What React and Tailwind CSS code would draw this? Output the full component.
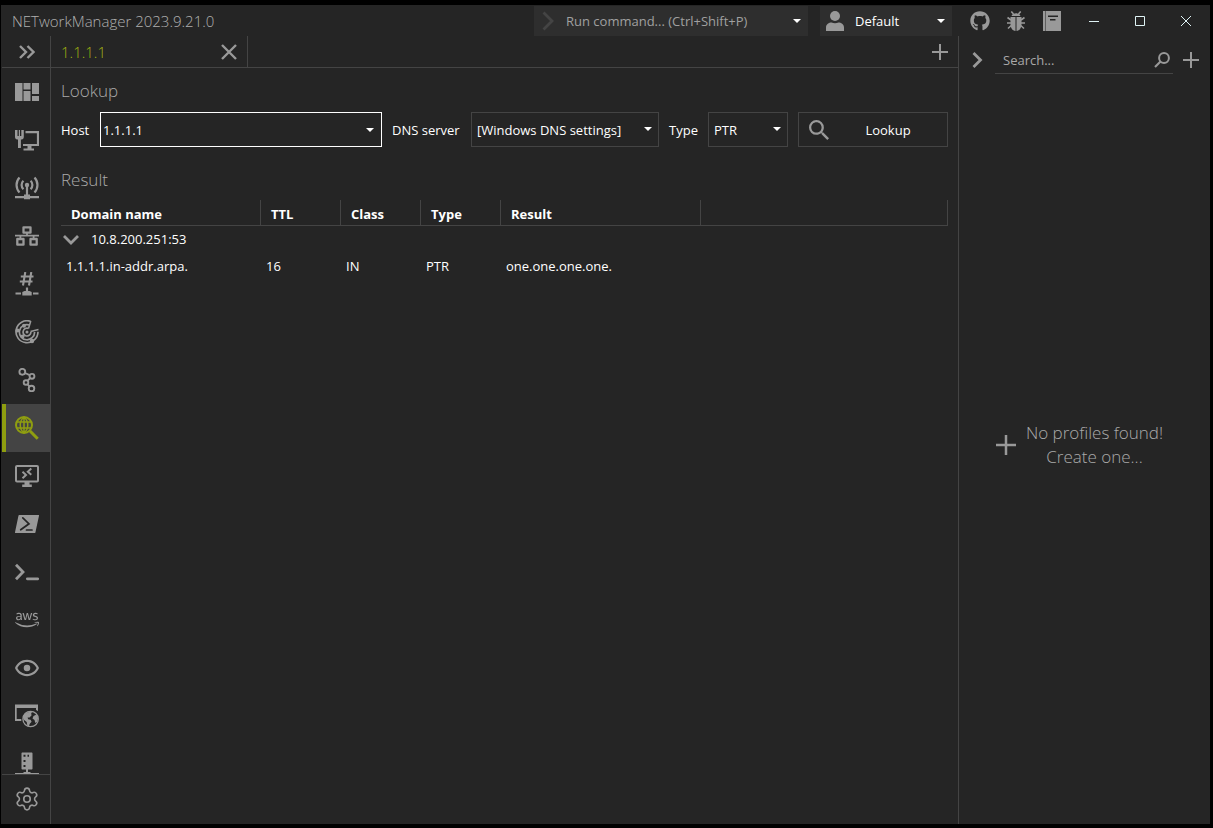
import { FaAws, FaGithub } from "react-icons/fa";
import { Settings } from "lucide-react";

function Icon({ box = "0 0 24 24", className = "size-6", children }) {
  return (
    <svg viewBox={box} className={className} fill="currentColor" aria-hidden="true">
      {children}
    </svg>
  );
}

function Plus({ className }) {
  return (
    <Icon box="0 0 16 16" className={className}>
      <path d="M7 0h2v7h7v2H9v7H7V9H0V7h7z" />
    </Icon>
  );
}

function Arrow() {
  return (
    <Icon box="0 0 8 4" className="h-1 w-2">
      <path d="M0 0h8L4 4z" />
    </Icon>
  );
}

function Stroke({ w = 2, ...rest }) {
  return <path fill="none" stroke="currentColor" strokeWidth={w} {...rest} />;
}

const magnify =
  "M9.5,3A6.5,6.5 0 0,1 16,9.5C16,11.11 15.41,12.59 14.44,13.73L14.71,14H15.5L20.5,19L19,20.5L14,15.5V14.71L13.73,14.44C12.59,15.41 11.11,16 9.5,16A6.5,6.5 0 0,1 3,9.5A6.5,6.5 0 0,1 9.5,3M9.5,5C7,5 5,7 5,9.5C5,12 7,14 9.5,14C12,14 14,12 14,9.5C14,7 12,5 9.5,5Z";

const tools = [
  {
    name: "Dashboard",
    icon: (
      <Icon>
        <path d="M0 3h7.5v18H0zM8.5 3h7v6.5h-7zM8.5 11h7v10h-7zM17 3h7v11h-7zM17 16h7v5h-7z" />
      </Icon>
    ),
  },
  {
    name: "Network interface",
    icon: (
      <Icon>
        <path d="M0 2h2.500v6h1.300V2h1.200v6h1.300V2h2.500v7c0 1.300-.9 2.300-2.200 2.500H5.900V20H3v-8.500H2.200C.9 11.300 0 10.300 0 9z" />
        <Stroke d="M10.500 4.200H23V17H8" w={2.2} />
        <path d="M12.500 18h4v2.600h2.500v2H8.500v-2h4z" />
      </Icon>
    ),
  },
  {
    name: "WiFi",
    icon: (
      <Icon>
        <circle cx="12" cy="9" r="2.200" />
        <Stroke d="M8.400 4.800a5.800 5.800 0 0 0 0 8.400M15.600 4.800a5.800 5.800 0 0 1 0 8.400M4.500 1.500a11 11 0 0 0 0 15M19.500 1.500a11 11 0 0 1 0 15M12 9v10" w={2.2} />
        <path d="M0 20h9v-1.500h6V20h9v2.200h-9v1H9v-1H0z" />
      </Icon>
    ),
  },
  {
    name: "IP scanner",
    icon: (
      <Icon>
        <Stroke d="M8.500 3.300h7v5.400h-7zM2.300 15h6.200v5.700H2.300zM15.500 15h6.200v5.700h-6.200z" w={2.3} strokeLinejoin="round" />
        <Stroke d="M12 9v3M0 11.700h24M5.400 12v3M18.600 12v3" w={1.8} />
      </Icon>
    ),
  },
  {
    name: "Port scanner",
    icon: (
      <Icon>
        <Stroke d="M10.300 0L8 13.500M16.300 0L14 13.500M5.800 4.500h12.700M4.800 9.500h12.700" w={2.1} />
        <Stroke d="M12 15.500v4M.5 21.500H6M18 21.500h5.500" w={2.2} />
        <path d="M9.500 19h5l2.200 1v3.500H7.300V20z" />
      </Icon>
    ),
  },
  {
    name: "Ping monitor",
    icon: (
      <Icon>
        <Stroke d="M15.500 1.300A11 11 0 1 0 23 11.800M14.500 5A7.600 7.600 0 1 0 19.600 12M13.500 8.500A3.900 3.900 0 1 0 15.900 12" w={1.7} />
        <Stroke d="M13.500 8.500l2.300-7.500M15.500 11.500l8-2" w={1.5} />
        <circle cx="12" cy="12" r="1.500" />
        <circle cx="9" cy="5.800" r="2" />
        <circle cx="2.500" cy="10.500" r="2" />
        <circle cx="7.500" cy="16.500" r="2" />
        <circle cx="17" cy="21" r="2.200" />
      </Icon>
    ),
  },
  {
    name: "Traceroute",
    icon: (
      <Icon>
        <g fill="none" stroke="currentColor" strokeWidth="1.900">
          <circle cx="7.300" cy="3.800" r="2.900" />
          <circle cx="17" cy="8.300" r="2.400" />
          <circle cx="11" cy="14.500" r="2.300" />
          <circle cx="16.500" cy="20.500" r="2.800" />
          <path d="M10 5l4.700 2.200M15.200 10l-2.500 2.700M12.600 16.300l1.900 2" />
        </g>
      </Icon>
    ),
  },
  {
    name: "DNS lookup",
    active: true,
    icon: (
      <Icon>
        <g fill="none" stroke="currentColor">
          <circle cx="9" cy="9" r="8" strokeWidth="2" />
          <path d="M9 1c-5 4-5 12 0 16M9 1c5 4 5 12 0 16M9 1v16M1.500 6h15M1.500 12h15" strokeWidth="1.500" />
          <path d="M15 15l7.700 7.700" strokeWidth="3" />
        </g>
      </Icon>
    ),
  },
  {
    name: "Remote desktop",
    icon: (
      <Icon>
        <rect x="1" y="2" width="22" height="15.500" rx="1" fill="none" stroke="currentColor" strokeWidth="2" />
        <Stroke d="M7.500 7.800l3.500 3.100-3.500 3.300M16.300 4.500l-3.500 3.200 3.500 3.100" w={2} />
        <path d="M9.500 18h5v2.500h2.300V23H7.200v-2.500h2.300z" />
      </Icon>
    ),
  },
  {
    name: "PowerShell",
    icon: (
      <Icon>
        <path d="M4.300 3H23.500c.4 0 .6.3.5.700L20.400 20.400c-.1.400-.4.600-.8.600H.5c-.4 0-.6-.3-.5-.700L3.500 3.600c.1-.4.400-.6.800-.6z" />
        <path d="M7.800 5.800l6.200 6-8.300 6M11.500 18h5.500" fill="none" stroke="#252525" strokeWidth="1.700" strokeLinecap="round" />
      </Icon>
    ),
  },
  {
    name: "PuTTY",
    icon: (
      <Icon>
        <Stroke d="M1 4.800l7 7.200-7 7.200" w={2.8} />
        <Stroke d="M12.300 18.800h10.400" w={2.7} strokeLinecap="round" />
      </Icon>
    ),
  },
  { name: "AWS session manager", icon: <FaAws className="size-6" aria-hidden="true" /> },
  {
    name: "TigerVNC",
    icon: (
      <Icon box="1 1 22 22">
        <path d="M12,9A3,3 0 0,1 15,12A3,3 0 0,1 12,15A3,3 0 0,1 9,12A3,3 0 0,1 12,9M12,4.500C17,4.500 21.270,7.610 23,12C21.270,16.390 17,19.500 12,19.500C7,19.500 2.730,16.390 1,12C2.730,7.610 7,4.500 12,4.500M3.180,12C4.830,15.360 8.240,17.500 12,17.500C15.760,17.500 19.170,15.360 20.820,12C19.170,8.640 15.760,6.500 12,6.500C8.240,6.500 4.830,8.640 3.180,12Z" />
      </Icon>
    ),
  },
  {
    name: "Web console",
    icon: (
      <Icon>
        <path d="M0 .5h23v6.800a9 9 0 0 0-2-1.300V4H1.700v11h4.600v2H0z" />
        <circle cx="15.600" cy="15" r="7.700" fill="none" stroke="currentColor" strokeWidth="1.300" />
        <path d="M11 9.200c1.500-1 4-1.600 6-1l-1 1.800.8 1-2.200 2.400-2 .2.500 1.600 2.500.6 1 2-1.800 2-1 2.400-1.500-.6-.6-3.600-2.600-2-1.200-2.500c.5-2 1.600-3.500 3.100-4.300zM18.500 12l3-1.500 1.600 3.500-1 4-1.800 1-.8-3-2-1.500z" />
      </Icon>
    ),
  },
  {
    name: "SNMP",
    icon: (
      <Icon>
        <path fillRule="evenodd" d="M7.500.5h9c.6 0 1 .4 1 1v15c0 .600-.4 1-1 1H13V20h2l1 1h8v2H0v-2h8l1-1h2v-2.500H7.500c-.6 0-1-.4-1-1v-15c0-.6.4-1 1-1zM8.500 2.800v2h2v-2zM12.500 2.800v2H14v-2zM8.500 8v2h2V8zM8.500 13v2h2v-2z" />
      </Icon>
    ),
  },
];

const columns = ["Domain name", "TTL", "Class", "Type", "Result"];
const record = ["1.1.1.1.in-addr.arpa.", "16", "IN", "PTR", "one.one.one.one."];

function TitleBar() {
  return (
    <header className="flex h-[31px] shrink-0 items-center">
      <h1 className="flex-1 pt-[2px] pl-[11px] text-[15px] font-light text-[#b0b0b0]">NETworkManager 2023.9.21.0</h1>
      <div className="mt-px flex h-[30px] w-[274px] items-center bg-[#2e2e2e] pr-[7px]">
        <Icon box="0 0 12 20" className="ml-2 h-5 w-3 text-[#444]">
          <Stroke d="M1.500 1.500L10 10l-8.500 8.500" w={2.8} />
        </Icon>
        <input
          aria-label="Run command"
          placeholder="Run command... (Ctrl+Shift+P)"
          className="ml-3 min-w-0 flex-1 bg-transparent pt-[2px] text-[13px] outline-none placeholder:text-[#a0a0a0]"
        />
        <button aria-label="Show commands" className="text-white">
          <Arrow />
        </button>
      </div>
      <div className="relative mt-px ml-3 flex h-[30px] w-[132px] items-center bg-[#2e2e2e] text-white">
        <Icon box="0 0 18 20" className="ml-[6px] h-5 w-[18px] text-[#999]">
          <circle cx="9" cy="5" r="5" />
          <path d="M0 20v-3.500C0 13 3 11.500 5.500 11.500c2 1 5 1 7 0 2.500 0 5.500 1.500 5.500 5V20z" />
        </Icon>
        <select aria-label="Profile" className="ml-[11px] flex-1 appearance-none bg-transparent pt-[2px] text-[13px] outline-none">
          <option>Default</option>
        </select>
        <span className="pointer-events-none absolute right-[7px]">
          <Arrow />
        </span>
      </div>
      <div className="ml-[18px] flex gap-4 text-[#999]">
        <button aria-label="GitHub">
          <FaGithub className="size-5" />
        </button>
        <button aria-label="Report a bug">
          <Icon box="0 0 20 20" className="size-5">
            <path d="M5.500 5C6 3 8 2.200 10 2.200s4 .8 4.500 2.800zM4.500 6h5v13.900C6.200 19.600 4.500 17 4.500 13zM15.500 6h-5v13.900c3.300-.3 5-2.900 5-6.900z" />
            <Stroke d="M7.500 3L5.300.5M12.500 3L14.700.5M5 9L1.500 6.500M15 9l3.500-2.500M5 12H1M15 12h4M5.300 14.500L2 17.500M14.700 14.500l3.300 3" w={1.600} />
          </Icon>
        </button>
        <button aria-label="Documentation">
          <Icon box="0 0 20 20" className="size-5">
            <path fillRule="evenodd" d="M1 0h2v20H1zM3.500 0H19v20H3.500zM6 4.500v1.500h10V4.500zM8 8v1.500h5.500V8z" />
          </Icon>
        </button>
      </div>
      <div className="ml-[9px] flex pr-px text-[#dff3f5]">
        {[
          ["Minimize", "M0 5.500h10"],
          ["Maximize", "M.5.500h9v9h-9z"],
          ["Close", "M0 0l10 10M10 0L0 10"],
        ].map(([label, d]) => (
          <button key={label} aria-label={label} className="flex h-[31px] w-[46px] items-center justify-center">
            <Icon box="0 0 10 10" className="size-[10px]">
              <Stroke d={d} w={1} />
            </Icon>
          </button>
        ))}
      </div>
    </header>
  );
}

function Sidebar() {
  return (
    <nav className="ml-px flex w-[49px] shrink-0 flex-col border-r border-[#444] text-[#999]">
      <button aria-label="Expand menu" className="flex h-8 shrink-0 items-center border-b border-[#444] pl-[17px]">
        <Icon box="0 0 16 14" className="h-[14px] w-4">
          <Stroke d="M1 1l6 6-6 6M8.500 1l6 6-6 6" w={2.4} />
        </Icon>
      </button>
      <div className="flex min-h-0 flex-1 flex-col overflow-hidden">
        {tools.map((tool) => (
          <button
            key={tool.name}
            aria-label={tool.name}
            className={
              tool.active
                ? "flex h-12 shrink-0 items-center border-l-4 border-[#8f9e10] bg-[#444] pl-[9px] text-[#8f9e10]"
                : "flex h-12 shrink-0 items-center pl-[13px]"
            }
          >
            {tool.icon}
          </button>
        ))}
      </div>
      <button aria-label="Settings" className="flex h-[50px] shrink-0 items-center border-t border-[#444] pb-[2px] pl-3">
        <Settings className="size-[26px]" strokeWidth={1.5} />
      </button>
    </nav>
  );
}

function Combo({ id, options }) {
  return (
    <div className="relative">
      <select
        id={id}
        className="h-[35px] w-full appearance-none border border-[#444] bg-transparent pt-[2px] pl-[5px] text-[13px] text-white outline-none"
      >
        {options.map((o) => (
          <option key={o}>{o}</option>
        ))}
      </select>
      <span className="pointer-events-none absolute top-[15px] right-[7px]">
        <Arrow />
      </span>
    </div>
  );
}

function Main() {
  return (
    <main className="flex min-w-0 flex-1 flex-col">
      <div className="flex h-8 shrink-0 items-center border-b border-[#444] pr-[10px]">
        <div className="flex h-full w-[197px] items-center justify-between border-r border-[#444] pr-[10px] pl-[10px]">
          <a href="#lookup" className="pt-[2px] text-[15px] font-light text-[#a3b412]">
            1.1.1.1
          </a>
          <button aria-label="Close tab" className="text-[#999]">
            <Icon box="0 0 16 16" className="size-4">
              <Stroke d="M1 1l14 14M15 1L1 15" w={2.4} />
            </Icon>
          </button>
        </div>
        <button aria-label="New tab" className="ml-auto text-[#999]">
          <Plus className="size-4" />
        </button>
      </div>
      <section id="lookup" className="px-[10px] pt-[11px]">
        <h2 className="text-[17px] leading-6 font-light text-[#aaa]">Lookup</h2>
        <form className="mt-[9px] grid grid-cols-[29px_1fr_69px_188px_29px_80px_150px] items-center gap-x-[10px] whitespace-nowrap">
          <label htmlFor="host" className="pt-[2px]">Host</label>
          <div className="flex h-[35px] items-center border border-white pr-[7px] pl-[2px]">
            <input id="host" defaultValue="1.1.1.1" className="min-w-0 flex-1 bg-transparent pt-[2px] text-[13px] outline-none" />
            <button type="button" aria-label="Show recent hosts">
              <Arrow />
            </button>
          </div>
          <label htmlFor="server" className="pt-[2px]">DNS server</label>
          <Combo id="server" options={["[Windows DNS settings]"]} />
          <label htmlFor="type" className="pt-[2px]">Type</label>
          <Combo id="type" options={["PTR"]} />
          <button type="button" className="flex h-[35px] items-center border border-[#444] pl-[10px]">
            <Icon box="3 3 17.5 17.5" className="size-5 text-[#999]">
              <path d={magnify} />
            </Icon>
            <span className="flex-1 pt-[2px]">Lookup</span>
          </button>
        </form>
        <h2 className="mt-[21px] text-[17px] leading-6 font-light text-[#aaa]">Result</h2>
        <table className="mt-2 w-full table-fixed border-separate border-spacing-0 text-left">
          <colgroup>
            <col className="w-[200px]" />
            <col className="w-[80px]" />
            <col className="w-[80px]" />
            <col className="w-[80px]" />
            <col className="w-[200px]" />
            <col />
          </colgroup>
          <thead>
            <tr>
              {columns.map((c) => (
                <th key={c} className="h-[26px] border-r border-b border-[#444] p-0 pt-1 pl-[10px] font-bold">
                  {c}
                </th>
              ))}
              <td className="border-r border-b border-[#444]" />
            </tr>
          </thead>
          <tbody>
            <tr>
              <td colSpan={6} className="h-[26px] p-0 pt-[2px]">
                <button className="flex items-center gap-3 pl-[2px]">
                  <Icon box="0 0 16 10" className="h-[10px] w-4 text-[#999]">
                    <Stroke d="M1 1l7 7 7-7" w={2.8} />
                  </Icon>
                  10.8.200.251:53
                </button>
              </td>
            </tr>
            <tr>
              {record.map((v) => (
                <td key={v} className="h-[26px] p-0 pt-1 pl-[5px]">
                  {v}
                </td>
              ))}
              <td />
            </tr>
          </tbody>
        </table>
      </section>
    </main>
  );
}

function Profiles() {
  return (
    <aside className="flex w-[252px] shrink-0 flex-col border-l border-[#444] text-[#999]">
      <div className="mt-[10px] flex h-7 items-center pr-[11px] pl-[13px]">
        <button aria-label="Hide profiles">
          <Icon box="0 0 11 16" className="h-4 w-[11px]">
            <Stroke d="M1.500 1l7 7-7 7" w={2.8} />
          </Icon>
        </button>
        <div className="ml-3 flex h-full min-w-0 flex-1 items-center border-b border-[#444] pr-[3px] pl-2">
          <input
            aria-label="Search"
            placeholder="Search..."
            className="min-w-0 flex-1 bg-transparent pt-[2px] text-[13px] outline-none placeholder:text-[#a8a8a8]"
          />
          <button aria-label="Start search">
            <Icon box="0 0 16 16" className="size-4">
              <circle cx="10" cy="6" r="4.900" fill="none" stroke="currentColor" strokeWidth="2" />
              <Stroke d="M6.500 9.500l-5.500 5.500" w={2.2} />
            </Icon>
          </button>
        </div>
        <button aria-label="Add profile" className="ml-[10px]">
          <Plus className="size-4" />
        </button>
      </div>
      <div className="flex flex-1 items-center justify-center pr-[10px] pb-2">
        <button className="flex items-center gap-[10px]">
          <Plus className="size-5" />
          <span className="text-[17px] leading-6 font-light text-[#aaa]">
            No profiles found!
            <br />
            Create one...
          </span>
        </button>
      </div>
    </aside>
  );
}

export default function App() {
  return (
    <div className="h-screen bg-black pt-[5px] pr-[3px] pb-1 pl-px font-['Open_Sans','Noto_Sans',sans-serif]">
      <div className="flex h-full flex-col bg-[#252525] text-[13px] text-white">
        <TitleBar />
        <div className="flex min-h-0 flex-1">
          <Sidebar />
          <Main />
          <Profiles />
        </div>
      </div>
    </div>
  );
}
